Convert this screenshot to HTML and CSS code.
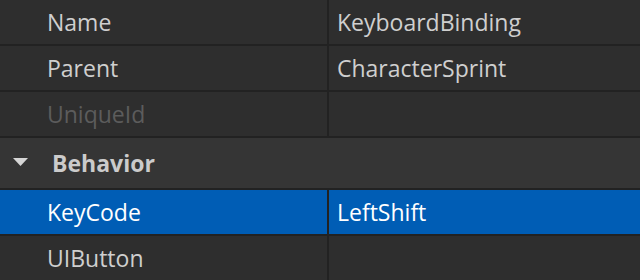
FILE: index.html
```html
<!DOCTYPE html>
<html>
<head>
<meta charset="utf-8">
<link rel="stylesheet" href="styles.css">
</head>
<body>
<div class="props">
  <div class="row">
    <div class="name">Name</div>
    <div class="value">KeyboardBinding</div>
  </div>
  <div class="row">
    <div class="name">Parent</div>
    <div class="value">CharacterSprint</div>
  </div>
  <div class="row">
    <div class="name dim">UniqueId</div>
    <div class="value"></div>
  </div>
  <div class="group">
    <svg class="caret" width="15" height="8" viewBox="0 0 15 8"><polygon points="0,0 15,0 7.5,8" fill="#d6d6d6"/></svg>
    <span class="group-title">Behavior</span>
  </div>
  <div class="row selected">
    <div class="name">KeyCode</div>
    <div class="value">LeftShift</div>
  </div>
  <div class="row">
    <div class="name">UIButton</div>
    <div class="value"></div>
  </div>
</div>
</body>
</html>
```
FILE: styles.css
```css
* { box-sizing: border-box; }
html, body {
  margin: 0;
  padding: 0;
  background: #2e2e2e;
  overflow: hidden;
}
.props {
  display: flex;
  flex-direction: column;
  font-family: "Open Sans", "Noto Sans", sans-serif;
  font-size: 23px;
  color: #cfcfcf;
}
.row {
  display: grid;
  grid-template-columns: 329px 1fr;
  height: 46px;
  flex: none;
  border-bottom: 2px solid #222222;
  background: #2e2e2e;
}
.name {
  display: flex;
  align-items: center;
  padding-left: 47px;
  border-right: 2px solid #222222;
  white-space: nowrap;
}
.value {
  display: flex;
  align-items: center;
  padding-left: 8px;
  white-space: nowrap;
}
.dim { color: #5c5c5c; }
.group {
  display: flex;
  align-items: center;
  height: 52px;
  flex: none;
  padding-left: 13px;
  gap: 24px;
  background: #353535;
  border-bottom: 2px solid #222222;
}
.caret { display: block; margin-top: -2px; }
.group-title {
  font-weight: 700;
  font-size: 23px;
  color: #cbcbcb;
}
.row.selected {
  background: #005db5;
  color: #ffffff;
}
```
